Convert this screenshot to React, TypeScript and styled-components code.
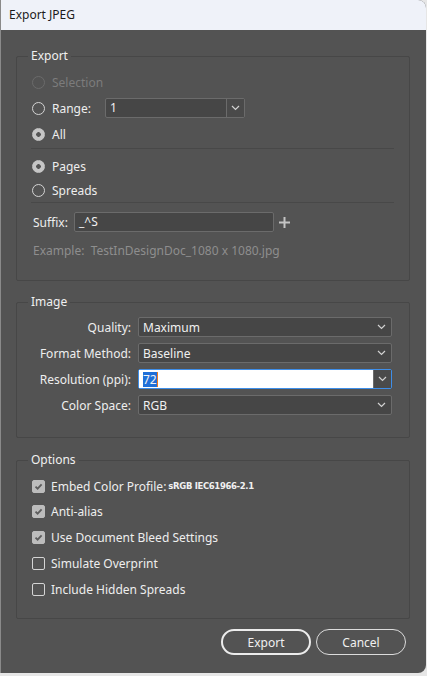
import styled, { createGlobalStyle } from "styled-components";

const GlobalStyle = createGlobalStyle`
  html, body {
    margin: 0;
    padding: 0;
    background: #e6e6e6;
  }
  * {
    box-sizing: border-box;
  }
`;

const FONT = `"Noto Sans", "Open Sans", sans-serif`;

export default function App() {
  return (
    <>
      <GlobalStyle />
      <Window>
        <TitleBar>Export JPEG</TitleBar>
        <Body>
          <Panel $pad="8px 15px 21px 11px">
            <Legend>Export</Legend>
            <Group $gap={6}>
              <Radio label="Selection" disabled />
              <Radio label="Range:" labelWidth={53}>
                <Combo $width={140}>
                  <ComboText>1</ComboText>
                  <ComboButton>
                    <Chevron />
                  </ComboButton>
                </Combo>
              </Radio>
              <Radio label="All" checked />
            </Group>
            <Separator $top={4} />
            <Group $gap={4} $top={7}>
              <Radio label="Pages" checked />
              <Radio label="Spreads" />
            </Group>
            <Separator $top={2} />
            <SuffixRow>
              <FieldLabel>Suffix:</FieldLabel>
              <TextInput>_^S</TextInput>
              <PlusIcon />
            </SuffixRow>
            <Example>Example:&nbsp; TestInDesignDoc_1080 x 1080.jpg</Example>
          </Panel>

          <Panel $pad="7px 17px 22px 11px" $top={13}>
            <Legend>Image</Legend>
            <FormGrid>
              <GridLabel>Quality:</GridLabel>
              <Select value="Maximum" />
              <GridLabel>Format Method:</GridLabel>
              <Select value="Baseline" />
              <GridLabel>Resolution (ppi):</GridLabel>
              <FocusCombo>
                <FocusText>
                  <Selected>72</Selected>
                  <Caret />
                </FocusText>
                <ComboButton>
                  <Chevron />
                </ComboButton>
              </FocusCombo>
              <GridLabel>Color Space:</GridLabel>
              <Select value="RGB" />
            </FormGrid>
          </Panel>

          <Panel $pad="8px 15px 19px 11px" $top={14}>
            <Legend>Options</Legend>
            <Group $gap={5.75}>
              <Check checked label="Embed Color Profile:">
                <Profile>sRGB IEC61966-2.1</Profile>
              </Check>
              <Check checked label="Anti-alias" />
              <Check checked label="Use Document Bleed Settings" />
              <Check label="Simulate Overprint" />
              <Check label="Include Hidden Spreads" />
            </Group>
          </Panel>

          <Footer>
            <Button $primary>Export</Button>
            <Button>Cancel</Button>
          </Footer>
        </Body>
      </Window>
    </>
  );
}

function Radio({
  label,
  checked,
  disabled,
  labelWidth,
  children,
}: {
  label: string;
  checked?: boolean;
  disabled?: boolean;
  labelWidth?: number;
  children?: React.ReactNode;
}) {
  return (
    <OptionRow>
      <RadioDot $checked={checked} $disabled={disabled} />
      <OptionLabel $disabled={disabled} $width={labelWidth}>
        {label}
      </OptionLabel>
      {children}
    </OptionRow>
  );
}

function Check({
  label,
  checked,
  children,
}: {
  label: string;
  checked?: boolean;
  children?: React.ReactNode;
}) {
  return (
    <OptionRow>
      <CheckBox $checked={checked}>
        {checked && (
          <svg width="9" height="9" viewBox="0 0 9 9">
            <path
              d="M1.5 4.6 L3.6 6.7 L7.6 2.3"
              fill="none"
              stroke="#5c5c5c"
              strokeWidth="1.8"
            />
          </svg>
        )}
      </CheckBox>
      <OptionLabel $gap={6}>{label}</OptionLabel>
      {children}
    </OptionRow>
  );
}

function Select({ value }: { value: string }) {
  return (
    <SelectBox>
      <span>{value}</span>
      <Chevron />
    </SelectBox>
  );
}

function Chevron() {
  return (
    <svg width="9" height="6" viewBox="0 0 9 6">
      <path d="M1 1 L4.5 4.5 L8 1" fill="none" stroke="#d2d2d2" strokeWidth="1.2" />
    </svg>
  );
}

function PlusIcon() {
  return (
    <PlusWrap>
      <svg width="11" height="11" viewBox="0 0 11 11">
        <path d="M5.5 0 V11 M0 5.5 H11" stroke="#c4c4c4" strokeWidth="2" />
      </svg>
    </PlusWrap>
  );
}

const Window = styled.div`
  width: 426px;
  height: 673px;
  background: #535353;
  border-left: 1px solid #8a8a8a;
  border-radius: 0 8px 8px 0;
  overflow: hidden;
  display: flex;
  flex-direction: column;
  font-family: ${FONT};
  font-size: 12px;
  color: #ececec;
`;

const TitleBar = styled.div`
  height: 30px;
  flex-shrink: 0;
  background: #eff2f9;
  color: #1b1b1b;
  font-size: 12px;
  line-height: 30px;
  padding-left: 8px;
`;

const Body = styled.div`
  padding: 18px 16px 0 15px;
  display: flex;
  flex-direction: column;
`;

const Panel = styled.fieldset<{ $pad: string; $top?: number }>`
  margin: ${(p) => p.$top ?? 0}px 0 0;
  padding: ${(p) => p.$pad};
  border: 1px solid #474747;
  border-radius: 2px;
  min-width: 0;
`;

const Legend = styled.legend`
  padding: 0 3px;
  line-height: 16px;
  font-size: 12px;
  color: #f0f0f0;
`;

const Group = styled.div<{ $gap: number; $top?: number }>`
  display: flex;
  flex-direction: column;
  gap: ${(p) => p.$gap}px;
  margin-top: ${(p) => p.$top ?? 0}px;
`;

const OptionRow = styled.div`
  height: 20px;
  display: flex;
  align-items: center;
  padding-left: 4px;
`;

const RadioDot = styled.span<{ $checked?: boolean; $disabled?: boolean }>`
  width: 13px;
  height: 13px;
  flex-shrink: 0;
  border-radius: 50%;
  border: 1px solid ${(p) => (p.$disabled ? "#6b6b6b" : p.$checked ? "#c6c6c6" : "#d4d4d4")};
  background: ${(p) =>
    p.$checked
      ? "radial-gradient(circle, #555 0 2px, #c6c6c6 2.6px)"
      : "transparent"};
`;

const CheckBox = styled.span<{ $checked?: boolean }>`
  width: 13px;
  height: 13px;
  flex-shrink: 0;
  border-radius: 2px;
  border: 1px solid ${(p) => (p.$checked ? "#bcbcbc" : "#d4d4d4")};
  background: ${(p) => (p.$checked ? "#bcbcbc" : "transparent")};
  display: flex;
  align-items: center;
  justify-content: center;
`;

const OptionLabel = styled.span<{ $disabled?: boolean; $width?: number; $gap?: number }>`
  margin-left: ${(p) => p.$gap ?? 7}px;
  color: ${(p) => (p.$disabled ? "#7c7c7c" : "#eeeeee")};
  white-space: nowrap;
  ${(p) => (p.$width ? `width: ${p.$width}px; flex-shrink: 0;` : "")}
`;

const Profile = styled.span`
  margin-left: 2px;
  font-family: "DejaVu Sans", sans-serif;
  font-size: 8.5px;
  font-weight: bold;
  color: #f0f0f0;
  letter-spacing: -0.35px;
`;

const Combo = styled.div<{ $width: number }>`
  width: ${(p) => p.$width}px;
  height: 20px;
  display: flex;
  border: 1px solid #6b6b6b;
  border-radius: 2px;
  background: #464646;
`;

const ComboText = styled.span`
  flex: 1;
  padding-left: 4px;
  line-height: 18px;
  color: #f0f0f0;
`;

const ComboButton = styled.span`
  width: 18px;
  flex-shrink: 0;
  border-left: 1px solid #6b6b6b;
  background: #4a4a4a;
  display: flex;
  align-items: center;
  justify-content: center;
`;

const Separator = styled.div<{ $top: number }>`
  height: 1px;
  margin: ${(p) => p.$top}px 0 0 3px;
  background: #484848;
`;

const SuffixRow = styled.div`
  margin-top: 9px;
  height: 20px;
  display: flex;
  align-items: center;
  padding-left: 5px;
`;

const FieldLabel = styled.span`
  width: 41px;
  flex-shrink: 0;
  color: #eeeeee;
`;

const TextInput = styled.span`
  width: 200px;
  height: 20px;
  border: 1px solid #6b6b6b;
  border-radius: 2px;
  background: #464646;
  padding-left: 4px;
  line-height: 18px;
  color: #f0f0f0;
`;

const PlusWrap = styled.span`
  margin-left: 5px;
  display: flex;
`;

const Example = styled.div`
  margin-top: 11px;
  padding-left: 5px;
  line-height: 16px;
  color: #8e8e8e;
`;

const FormGrid = styled.div`
  display: grid;
  grid-template-columns: 103px 1fr;
  column-gap: 7px;
  row-gap: 6px;
  align-items: center;
`;

const GridLabel = styled.span`
  text-align: right;
  white-space: nowrap;
  color: #eeeeee;
`;

const SelectBox = styled.div`
  height: 20px;
  border: 1px solid #6b6b6b;
  border-radius: 2px;
  background: #464646;
  display: flex;
  align-items: center;
  justify-content: space-between;
  padding: 0 5px 0 4px;
  color: #f0f0f0;
`;

const FocusCombo = styled.div`
  height: 20px;
  display: flex;
  border: 1px solid #3e8ee9;
  border-radius: 2px;
  background: #4a4a4a;
`;

const FocusText = styled.span`
  flex: 1;
  background: #ffffff;
  display: flex;
  align-items: center;
  padding-left: 4px;
`;

const Selected = styled.span`
  background: #1f6fd8;
  color: #f4f4f4;
  line-height: 15px;
`;

const Caret = styled.span`
  width: 1px;
  height: 15px;
  background: #f07a1a;
`;

const Footer = styled.div`
  margin-top: 10px;
  padding-right: 4px;
  display: flex;
  justify-content: flex-end;
  gap: 5px;
`;

const Button = styled.button<{ $primary?: boolean }>`
  width: 90px;
  height: 26px;
  border-radius: 13px;
  background: transparent;
  border: ${(p) => (p.$primary ? "2px solid #ececec" : "1px solid #dcdcdc")};
  color: #f0f0f0;
  font-family: ${FONT};
  font-size: 12px;
  padding: 0;
`;
